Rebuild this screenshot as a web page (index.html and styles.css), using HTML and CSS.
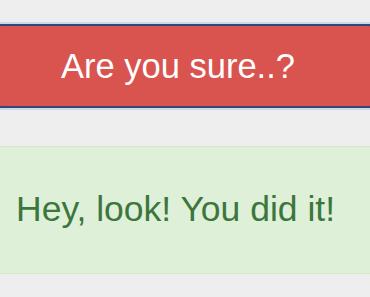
FILE: index.html
```html
<!DOCTYPE html>
<html>
<head>
<meta charset="utf-8">
<link rel="stylesheet" href="styles.css">
</head>
<body>
<div class="page">
  <button class="btn-danger">Are you sure..?</button>
  <div class="alert-success">Hey, look! You did it!</div>
</div>
</body>
</html>
```
FILE: styles.css
```css
html, body {
  margin: 0;
  padding: 0;
  background: #eeeeee;
  width: 370px;
  height: 297px;
  overflow: hidden;
}
.page {
  display: flex;
  flex-direction: column;
  padding-top: 24px;
  font-family: "Liberation Sans", Arial, sans-serif;
}
.btn-danger {
  box-sizing: border-box;
  width: 376px;
  margin-left: -3px;
  height: 84px;
  background: #d9534f;
  color: #ffffff;
  border: 2px solid #34467a;
  border-radius: 4px;
  box-shadow: 0 0 0 2px #c9d8ea;
  font-family: "Liberation Sans", Arial, sans-serif;
  font-size: 34.5px;
  padding: 0 14px 0 0;
  display: flex;
  align-items: center;
  justify-content: center;
}
.alert-success {
  box-sizing: border-box;
  margin-top: 38px;
  height: 128px;
  background: #dff0d8;
  border-top: 1px solid #d6e9c6;
  border-bottom: 1px solid #d6e9c6;
  color: #3c763d;
  font-size: 35.5px;
  padding-left: 16px;
  padding-bottom: 2px;
  display: flex;
  align-items: center;
}
```
